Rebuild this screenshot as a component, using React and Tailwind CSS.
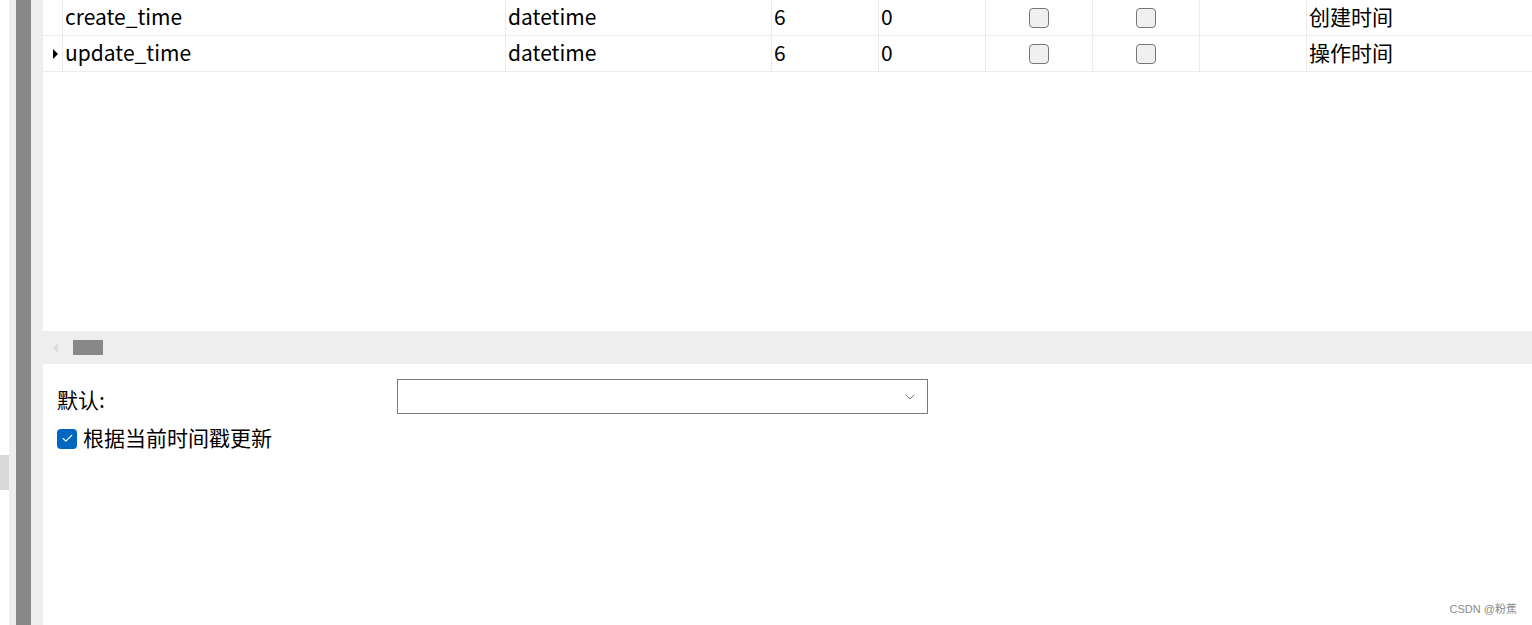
import { ChevronDown, Check } from 'lucide-react'

const cols = [443, 266, 107, 107, 107, 107, 107, 226]

const rows = [
  { name: 'create_time', type: 'datetime', len: '6', dec: '0', comment: '创建时间', current: false },
  { name: 'update_time', type: 'datetime', len: '6', dec: '0', comment: '操作时间', current: true },
]

function Box() {
  return <span className="block w-[20px] h-[20px] rounded-[4px] border border-[#777] bg-[#f0f0f0]" />
}

function Row({ r }) {
  return (
    <div className="flex h-[36px] border-b border-[#ececec]">
      <div className="w-[20px] shrink-0 border-r border-[#ececec] flex items-center justify-end pr-[4px]">
        {r.current && <span className="w-0 h-0 border-y-[5px] border-y-transparent border-l-[5px] border-l-black" />}
      </div>
      <div style={{ width: cols[0] }} className="shrink-0 border-r border-[#ececec] pl-[2px] pb-[3px] flex items-center">{r.name}</div>
      <div style={{ width: cols[1] }} className="shrink-0 border-r border-[#ececec] pl-[2px] pb-[3px] flex items-center">{r.type}</div>
      <div style={{ width: cols[2] }} className="shrink-0 border-r border-[#ececec] pl-[2px] pb-[3px] flex items-center">{r.len}</div>
      <div style={{ width: cols[3] }} className="shrink-0 border-r border-[#ececec] pl-[2px] pb-[3px] flex items-center">{r.dec}</div>
      <div style={{ width: cols[4] }} className="shrink-0 border-r border-[#ececec] flex items-center justify-center"><Box /></div>
      <div style={{ width: cols[5] }} className="shrink-0 border-r border-[#ececec] flex items-center justify-center"><Box /></div>
      <div style={{ width: cols[6] }} className="shrink-0 border-r border-[#ececec]" />
      <div className="flex-1 pl-[2px] pb-[3px] flex items-center">{r.comment}</div>
    </div>
  )
}

export default function App() {
  return (
    <div className="w-[1532px] h-[625px] flex bg-white text-black text-[21px] overflow-hidden font-['Noto_Sans_CJK_SC','Noto_Sans',sans-serif]">
      <div className="w-[9px] shrink-0 flex flex-col">
        <div className="h-[455px]" />
        <div className="h-[35px] bg-[#d9d9d9]" />
      </div>
      <div className="w-[7px] shrink-0 bg-[#eeeeee]" />
      <div className="w-[15px] shrink-0 bg-[#888888]" />
      <div className="w-[12px] shrink-0 bg-[#eeeeee]" />
      <div className="flex-1 flex flex-col min-w-0">
        <div className="h-[331px] flex flex-col leading-none">
          {rows.map(r => <Row key={r.name} r={r} />)}
        </div>
        <div className="h-[33px] bg-[#eeeeee] flex items-center">
          <span className="ml-[10px] w-0 h-0 border-y-[5px] border-y-transparent border-r-[5px] border-r-[#dcdcdc]" />
          <span className="ml-[15px] w-[30px] h-[15px] bg-[#888888]" />
        </div>
        <div className="flex-1 flex flex-col pl-[14px] pt-[15px] relative">
          <div className="flex items-center h-[35px]">
            <span className="w-[340px] pt-[6px]">默认:</span>
            <div className="w-[531px] h-[35px] border border-[#7a7a7a] bg-white flex items-center justify-end pr-[9px]">
              <ChevronDown size={16} strokeWidth={1.1} color="#444" />
            </div>
          </div>
          <div className="flex items-center mt-[13px] gap-[6px]">
            <span className="w-[20px] h-[20px] rounded-[4px] bg-[#0067c0] flex items-center justify-center">
              <Check size={13} strokeWidth={2} color="#fff" />
            </span>
            <span className="leading-none pb-[2px]">根据当前时间戳更新</span>
          </div>
          <div className="absolute right-[15px] bottom-[8px] text-[11px] text-[#8a8a8a] font-['Liberation_Sans','Noto_Sans_CJK_SC',sans-serif]">CSDN @粉蕉</div>
        </div>
      </div>
    </div>
  )
}
